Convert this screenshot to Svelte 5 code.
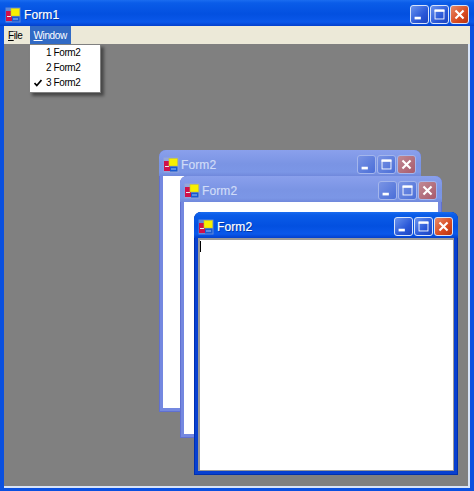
<script lang="ts">
const menus = ["File", "Window"];
const items = [
  { label: "1 Form2", checked: false },
  { label: "2 Form2", checked: false },
  { label: "3 Form2", checked: true },
];
const children = [
  { id: "first", active: false },
  { id: "second", active: false },
  { id: "third", active: true },
];
</script>

{#snippet appIcon()}
  <svg class="app-icon" width="16" height="16" viewBox="0 0 16 16">
    <rect x="0.5" y="0.5" width="15" height="15" fill="#a8b4d0" opacity="0.55" />
    <rect x="1" y="4" width="6" height="10" fill="#d0104a" />
    <rect x="2" y="9" width="4" height="1" fill="#e8e8f0" />
    <rect x="6" y="1.5" width="8.5" height="7.5" fill="#f8f000" stroke="#c0c040" stroke-width="0.6" />
    <rect x="7" y="9.5" width="7.5" height="5" fill="#1a5ad0" />
    <rect x="8" y="11.5" width="5" height="1" fill="#9cc4f4" />
  </svg>
{/snippet}

{#snippet buttons()}
  <div class="buttons">
    <div class="btn">
      <svg width="100%" height="100%" viewBox="0 0 19 19"><rect x="4" y="12" width="7" height="3" fill="#fff" /></svg>
    </div>
    <div class="btn">
      <svg width="100%" height="100%" viewBox="0 0 19 19"><rect x="4.5" y="4.5" width="10" height="10" fill="none" stroke="#fff" /><rect x="4" y="4" width="11" height="2.5" fill="#fff" /></svg>
    </div>
    <div class="btn close">
      <svg width="100%" height="100%" viewBox="0 0 19 19"><path d="M5 5l9 9M14 5l-9 9" stroke="#fff" stroke-width="2.4" fill="none" /></svg>
    </div>
  </div>
{/snippet}

<div class="form">
  <div class="titlebar main-title">
    {@render appIcon()}
    <span class="title">Form1</span>
    {@render buttons()}
  </div>
  <div class="menubar">
    {#each menus as menu, i}
      <span class="menu" class:open={i === 1}><u>{menu[0]}</u>{menu.slice(1)}</span>
    {/each}
  </div>
  <div class="client">
    {#each children as child}
      <div class="child {child.id}" class:inactive={!child.active}>
        <div class="titlebar">
          {@render appIcon()}
          <span class="title">Form2</span>
          {@render buttons()}
        </div>
        <div class="doc">
          {#if child.active}<i class="caret"></i>{/if}
        </div>
      </div>
    {/each}
    <div class="dropdown">
      {#each items as item}
        <div class="item">
          <span class="check">
            {#if item.checked}
              <svg width="8" height="8" viewBox="0 0 8 8"><path d="M0.5 4l2.3 2.5L7.5 1" stroke="#000" stroke-width="1.7" fill="none" /></svg>
            {/if}
          </span>
          {item.label}
        </div>
      {/each}
    </div>
  </div>
</div>

<style>
:global(body) {
  margin: 0;
}

.form {
  width: 474px;
  height: 491px;
  box-sizing: border-box;
  display: flex;
  flex-direction: column;
  padding: 0 4px 3px 4px;
  background: #0a50e0;
  font-family: "Liberation Sans", Arial, sans-serif;
  overflow: hidden;
}

.titlebar {
  display: flex;
  align-items: center;
  gap: 3px;
  flex: none;
  box-sizing: border-box;
  height: 26px;
  padding-top: 3px;
  color: #fff;
  background: linear-gradient(#1a6cf0 0, #0a5ce8 3px, #0350e0 14px, #0a58ea 22px, #0340cc 26px);
}

.main-title {
  margin: 0 -4px;
  padding: 3px 5px 0;
}

.title {
  font-size: 12px;
  letter-spacing: 0.1px;
  -webkit-text-stroke: 0.2px currentColor;
  text-shadow: 1px 1px 0 rgba(0, 20, 90, 0.5);
}

.app-icon {
  flex: none;
}

.buttons {
  display: flex;
  gap: 1px;
  margin-left: auto;
}

.btn {
  width: 19px;
  height: 19px;
  box-sizing: border-box;
  border: 1px solid #d8e4fa;
  border-radius: 3px;
  background: linear-gradient(135deg, #6a94ee, #2a58d8 60%, #1c44c0);
}

.btn.close {
  background: linear-gradient(135deg, #e88a68, #d84a20 60%, #b83410);
}

.menubar {
  flex: none;
  height: 18px;
  display: flex;
  align-items: stretch;
  background: #ece9d8;
  font-size: 10px;
  letter-spacing: -0.4px;
  color: #000;
}

.menu {
  display: flex;
  align-items: center;
  padding: 0 4px;
  margin-right: 3px;
}

.menu.open {
  background: #316ac5;
  color: #fff;
}

.client {
  position: relative;
  flex: 1;
  background: #808080;
  border: solid #d8e4f8;
  border-width: 0 2px 2px 0;
}

.child {
  position: absolute;
  display: flex;
  flex-direction: column;
  box-sizing: border-box;
  padding: 0 4px 4px;
  border-radius: 7px 7px 0 0;
  background: #0840d0;
  box-shadow: inset 0 0 0 1px #0030b0;
}

.child .titlebar {
  margin: 0 -4px;
  padding: 3px 5px 0 4px;
  border-radius: 7px 7px 0 0;
}

.child.inactive {
  background: #7488e0;
  box-shadow: inset 0 0 0 1px #6070d0;
}

.child.inactive .titlebar {
  gap: 2px;
  background: linear-gradient(#8aa0ec, #7a94e4 14px, #7b96e6 22px, #7088dc);
}

.child.inactive .buttons {
  gap: 1px;
}

.child.inactive .title {
  color: #d0dcf8;
  text-shadow: none;
}

.child.inactive .btn {
  background: linear-gradient(135deg, #7a94e4, #4a6ed8);
  border-color: #a4b6ec;
}

.child.inactive .btn.close {
  background: linear-gradient(135deg, #c08a94, #a85a6c);
}

.first {
  left: 155px;
  top: 106px;
  width: 262px;
  height: 262px;
}

.second {
  left: 176px;
  top: 132px;
  width: 262px;
  height: 262px;
}

.third {
  left: 190px;
  top: 168px;
  width: 264px;
  height: 263px;
}

.doc {
  position: relative;
  flex: 1;
  background: #fff;
}

.third .doc {
  border: solid #9a9a9a;
  border-width: 2px 1px 1px 2px;
}

.caret {
  position: absolute;
  left: 0;
  top: 1px;
  width: 1px;
  height: 11px;
  background: #000;
}

.dropdown {
  position: absolute;
  left: 25px;
  top: 0;
  width: 72px;
  height: 49px;
  box-sizing: border-box;
  background: #fff;
  border: 1px solid #808080;
  box-shadow: 3px 3px 3px rgba(0, 0, 0, 0.45);
  font-size: 10px;
  letter-spacing: -0.4px;
  color: #000;
}

.item {
  display: flex;
  align-items: center;
  height: 15px;
}

.check {
  display: flex;
  align-items: center;
  justify-content: center;
  flex: none;
  width: 16px;
}
</style>
